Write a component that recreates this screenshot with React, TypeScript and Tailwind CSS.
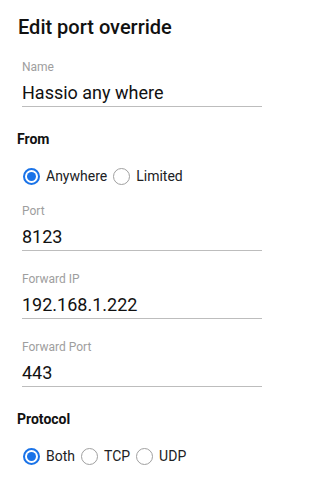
import React from "react";

type Option = { label: string; checked?: boolean };

function Radio({ checked }: { checked?: boolean }) {
  return checked ? (
    <span className="flex h-[17px] w-[17px] shrink-0 items-center justify-center rounded-full border-2 border-[#1a73e8]">
      <span className="h-[9px] w-[9px] rounded-full bg-[#1a73e8]" />
    </span>
  ) : (
    <span className="h-[17px] w-[17px] shrink-0 rounded-full border-[1.5px] border-[#a0a0a0]" />
  );
}

function RadioRow({ options }: { options: Option[] }) {
  return (
    <div className="ml-[23px] flex h-6 items-center gap-[6px]">
      {options.map((o) => (
        <div key={o.label} className="flex items-center gap-[6px]">
          <Radio checked={o.checked} />
          <span className="text-[14px] leading-6 text-[#202124]">{o.label}</span>
        </div>
      ))}
    </div>
  );
}

function Field({ label, value, className }: { label: string; value: string; className?: string }) {
  return (
    <div className={`ml-[22px] w-[240px] ${className ?? ""}`}>
      <div className="text-[12px] leading-[14px] text-[#9e9e9e]">{label}</div>
      <div className="mt-[7px] border-b border-[#bdbdbd] pb-px text-[18px] leading-6 text-[#111]">
        {value}
      </div>
    </div>
  );
}

function Heading({ children, className }: { children: React.ReactNode; className?: string }) {
  return (
    <div className={`pl-[17px] text-[14px] font-bold leading-4 text-[#111] ${className ?? ""}`}>
      {children}
    </div>
  );
}

export default function App() {
  return (
    <div className="h-[500px] w-[285px] overflow-hidden bg-white font-['Roboto',sans-serif]">
      <div className="pt-[15px] pl-[18px] text-[20px] font-medium leading-6 text-[#111]">
        Edit port override
      </div>

      <Field label="Name" value="Hassio any where" className="mt-[21px]" />

      <Heading className="mt-[24px]">From</Heading>
      <div className="mt-[17px]">
        <RadioRow options={[{ label: "Anywhere", checked: true }, { label: "Limited" }]} />
      </div>

      <Field label="Port" value="8123" className="mt-[16px]" />
      <Field label="Forward IP" value="192.168.1.222" className="mt-[21px]" />
      <Field label="Forward Port" value="443" className="mt-[21px]" />

      <Heading className="mt-[24px]">Protocol</Heading>
      <div className="mt-[17px]">
        <RadioRow
          options={[{ label: "Both", checked: true }, { label: "TCP" }, { label: "UDP" }]}
        />
      </div>
    </div>
  );
}
